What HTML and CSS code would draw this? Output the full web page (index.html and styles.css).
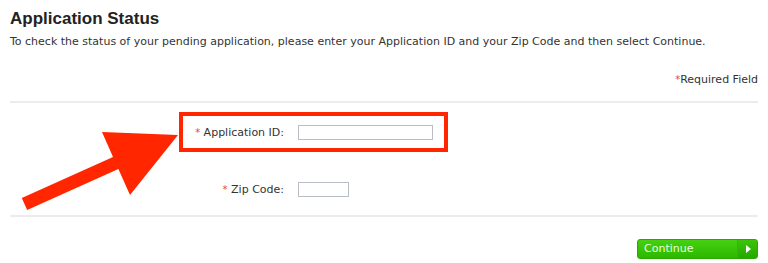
FILE: index.html
```html
<!DOCTYPE html>
<html lang="en">
<head>
  <meta charset="UTF-8" />
  <title>Application Status</title>
  <link rel="stylesheet" href="styles.css">
</head>
<body>
<main class="page">
  <h1 class="page-title">Application Status</h1>
  <p class="intro">To check the status of your pending application, please enter your Application ID and your Zip Code and then select Continue.</p>
  <div class="required-note"><span class="star">*</span>Required Field</div>

  <form class="status-form">
    <div class="form-row highlight">
      <label class="field-label" for="app-id"><span class="star">*</span> Application ID:</label>
      <input type="text" id="app-id" class="field-input wide">
    </div>
    <div class="form-row">
      <label class="field-label" for="zip"><span class="star">*</span> Zip Code:</label>
      <input type="text" id="zip" class="field-input short">
    </div>
  </form>

  <div class="actions">
    <button type="button" class="continue-btn">
      <span class="btn-text">Continue</span>
      <span class="btn-arrow"></span>
    </button>
  </div>
</main>

<!-- annotation arrow over the page -->
<svg class="callout-arrow" width="200" height="220" viewBox="0 0 200 220">
  <polygon points="21.8,198.1 113,157.1 102,132 178,135 130,195 118.4,168.9 27.2,209.9" fill="#ff2600"/>
</svg>
</body>
</html>
```

FILE: styles.css
```css
:root { --text:#333; --line:#ececec; --red:#ff2600; --star:#e8423a; }
* { box-sizing: border-box; }
body { margin:0; font-family:'DejaVu Sans',Verdana,sans-serif; color:var(--text); background:#fff; position:relative; }
.page { padding:0 10px; }
.page-title { margin:0; padding-top:9px; font-family:'Liberation Sans',Arial,sans-serif; font-size:17px; font-weight:bold; color:#222; line-height:20px; }
.intro { margin:6px 0 0; font-size:11px; line-height:14px; }
.required-note { margin-top:24px; text-align:right; font-size:11px; line-height:14px; }
.star { color:var(--star); font-size:10px; }
.status-form { margin-top:14px; border-top:2px solid var(--line); border-bottom:2px solid var(--line); padding:9px 0 13px; }
.form-row { display:flex; align-items:center; gap:14px; padding-left:173px; height:26px; margin-top:24px; }
.form-row.highlight { margin-top:0; margin-left:169px; padding-left:0; width:269px; height:40px; border:4px solid var(--red); }
.field-label { width:101px; text-align:right; font-size:11px; white-space:nowrap; }
.field-input { height:15px; border:1px solid #b9bec4; padding:0; font-size:10px; }
.field-input.wide { width:135px; }
.field-input.short { width:51px; }
.actions { display:flex; justify-content:flex-end; margin-top:22px; }
.continue-btn { display:flex; align-items:stretch; width:121px; height:20px; padding:0; border:1px solid #2aa800; border-radius:3px; background:linear-gradient(#46d012,#2cb800); cursor:pointer; overflow:hidden; }
.btn-text { flex:1; text-align:left; padding-left:6px; font-family:'DejaVu Sans',Verdana,sans-serif; font-size:11px; line-height:18px; color:#eaffdf; }
.btn-arrow { width:20px; border-left:1px solid #35b60a; background:linear-gradient(#3cc40c,#25a800); position:relative; }
.btn-arrow::after { content:''; position:absolute; left:8px; top:5px; border-left:5px solid #fff; border-top:4px solid transparent; border-bottom:4px solid transparent; }
.callout-arrow { position:absolute; left:0; top:0; }
```
